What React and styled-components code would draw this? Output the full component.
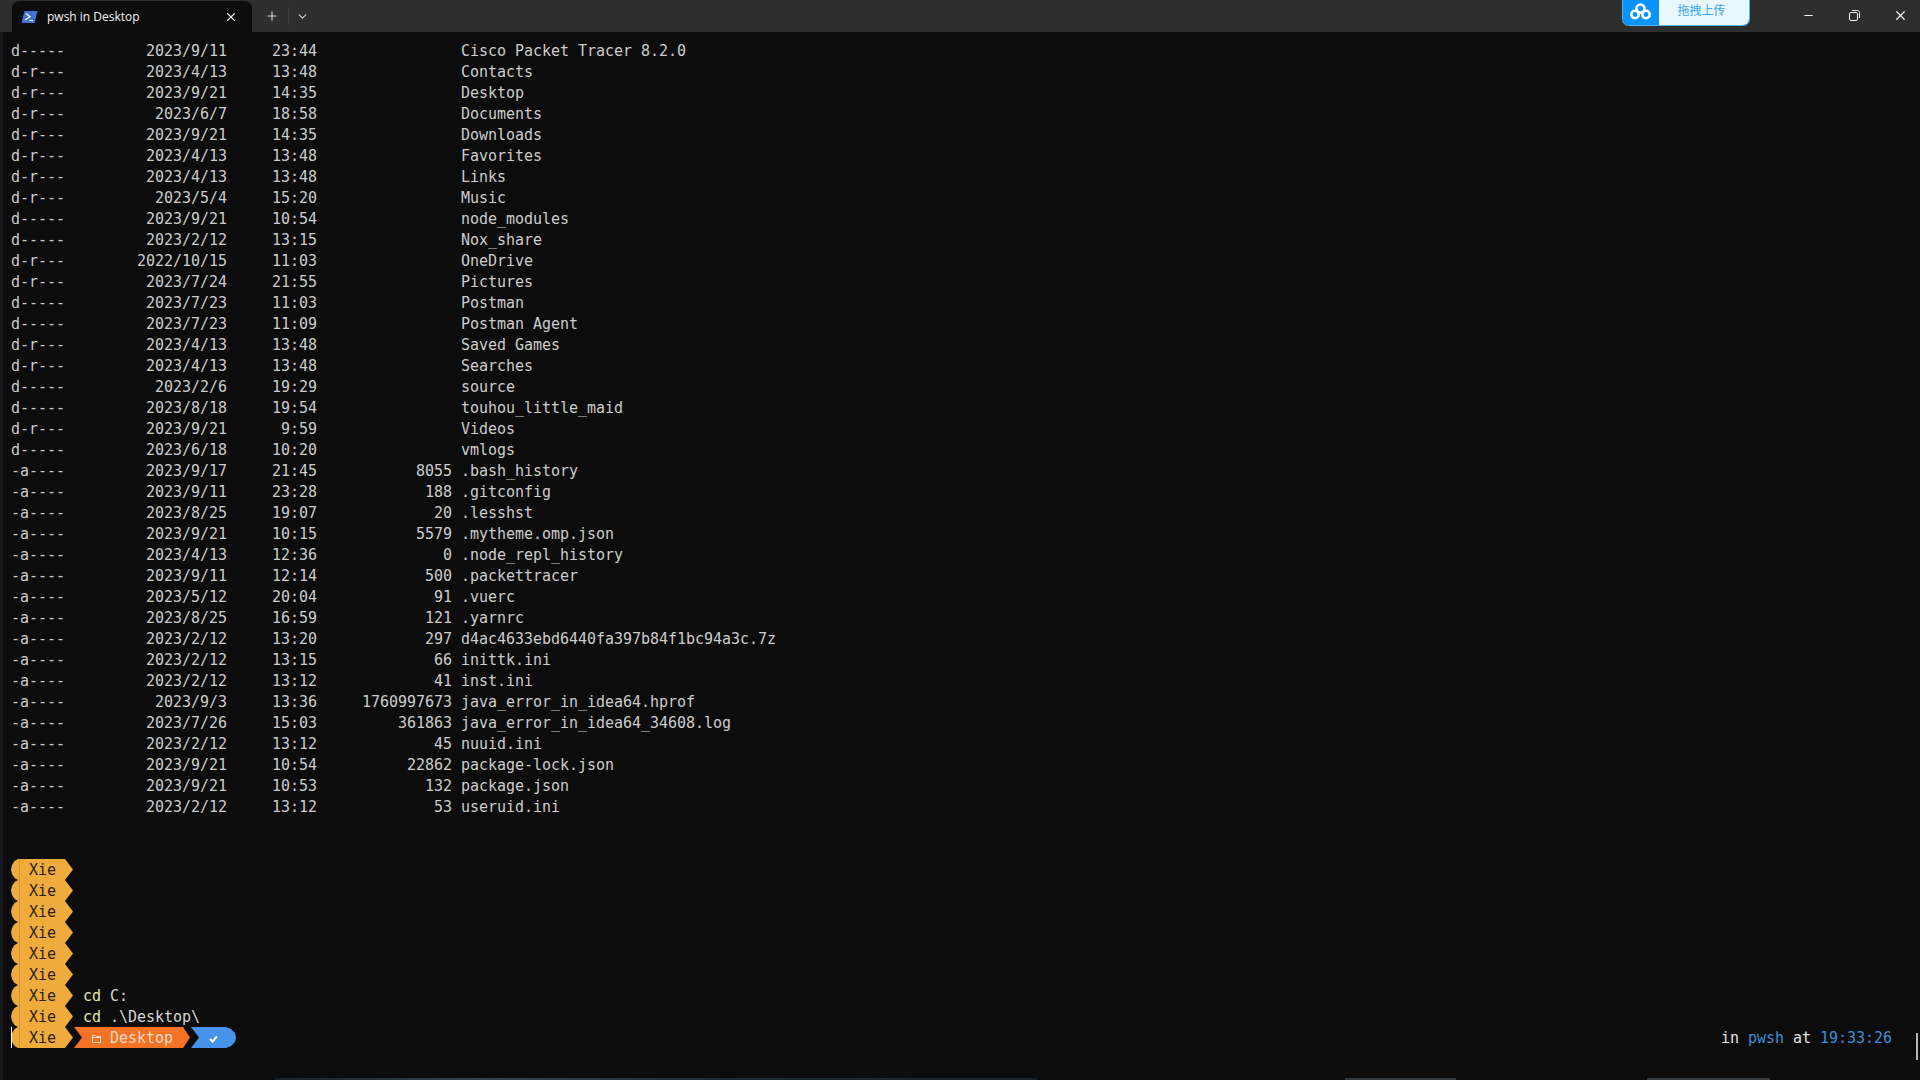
import React from "react";
import styled, { createGlobalStyle } from "styled-components";
import { Plus, ChevronDown, X, Minus } from "lucide-react";

const GlobalStyle = createGlobalStyle`
  html, body {
    margin: 0;
    height: 100%;
    background: #0c0c0c;
    overflow: hidden;
  }
`;

const mono = `"DejaVu Sans Mono", "Liberation Mono", monospace`;

const Window = styled.div`
  width: 1920px;
  height: 1080px;
  display: flex;
  flex-direction: column;
  background: #0c0c0c;
  overflow: hidden;
`;

const TitleBar = styled.div`
  height: 32px;
  flex: none;
  display: flex;
  align-items: flex-end;
  background: #2e2e2e;
  padding-left: 12px;
`;

const Tab = styled.div`
  width: 240px;
  height: 31px;
  display: flex;
  align-items: center;
  gap: 9px;
  padding: 0 14px 0 9px;
  box-sizing: border-box;
  background: #0c0c0c;
  border-radius: 7px 7px 0 0;
  color: #f4f4f4;
  font: 12px "Open Sans", "Liberation Sans", sans-serif;
`;

const TabTitle = styled.span`
  flex: 1;
`;

const TabTools = styled.div`
  display: flex;
  align-items: center;
  height: 32px;
  padding-left: 13px;
  gap: 9px;
  color: #d8d8d8;
`;

const ToolDivider = styled.div`
  width: 1px;
  height: 18px;
  margin-right: -2px;
  background: #3d3d3d;
`;

const Spacer = styled.div`
  flex: 1;
`;

const Upload = styled.div`
  align-self: flex-start;
  width: 128px;
  height: 26px;
  display: flex;
  box-sizing: border-box;
  border-radius: 0 0 7px 7px;
  border: 1px solid #4fb4f2;
  border-top: none;
  overflow: hidden;
  margin-right: 35px;
`;

const UploadLogo = styled.div`
  width: 36px;
  background: #0a94fb;
  display: flex;
  align-items: center;
  justify-content: center;
  padding: 0 2px 3px 0;
  box-sizing: border-box;
`;

const UploadLabel = styled.div`
  flex: 1;
  background: #e9f7ff;
  color: #3aa5ea;
  font: 12px "Noto Sans CJK SC", sans-serif;
  line-height: 19px;
  text-align: center;
  padding-right: 5px;
`;

const WinButtons = styled.div`
  align-self: stretch;
  display: flex;
  color: #f0f0f0;
  margin-right: -3px;
  padding-bottom: 2px;
`;

const WinButton = styled.div`
  width: 46px;
  display: flex;
  align-items: center;
  justify-content: center;
`;

const Terminal = styled.div`
  flex: 1;
  position: relative;
  padding: 9px 0 0 11px;
  border-left: 3px solid #17181a;
  box-sizing: border-box;
  color: #cccccc;
  font: 15px/21px ${mono};
  letter-spacing: -0.03px;
  white-space: pre;
`;

const Listing = styled.div`
  display: grid;
  grid-template-columns: 72px 144px 90px 135px 1fr;
  grid-auto-rows: 21px;
  margin-left: -3px;
`;

const Cell = styled.span`
  text-align: ${(p) => (p.$right ? "right" : "left")};
  padding-left: ${(p) => p.$pad || 0}px;
`;

const Blank = styled.div`
  height: 41px;
`;

const PromptRow = styled.div`
  height: 21px;
  display: flex;
  align-items: center;
  margin-left: -3px;
`;

const Pill = styled.div`
  height: 21px;
  display: flex;
  align-items: center;
  box-sizing: border-box;
  padding: 2px 0 0 ${(p) => p.$pl}px;
  color: ${(p) => p.$fg};
  background: ${(p) => p.$bg};
  clip-path: ${(p) => p.$clip};
  width: ${(p) => p.$w}px;
  margin-left: ${(p) => p.$ml || 0}px;
  flex: none;
`;

const XiePill = styled(Pill)`
  position: relative;

  &::before {
    content: "";
    position: absolute;
    left: 8px;
    top: 0;
    bottom: 0;
    width: 1px;
    background: #d0953a;
  }
`;

const Command = styled.span`
  color: #e6e6b0;
  margin-left: 10px;
  padding-top: 2px;
`;

const CommandArg = styled.span`
  color: #d6d6d6;
`;

const Dotted = styled.span`
  border-bottom: 1px dotted #f7d0b4;
  line-height: 19px;
`;

const RightPrompt = styled.div`
  position: absolute;
  right: 28px;
  bottom: 31px;
  height: 21px;
  color: #e4e4e4;
`;

const Blue = styled.span`
  color: #3f8cd4;
`;

const Caret = styled.div`
  position: absolute;
  left: ${(p) => p.$x}px;
  bottom: ${(p) => p.$b}px;
  width: ${(p) => p.$w}px;
  height: ${(p) => p.$h}px;
  background: ${(p) => p.$c};
`;

const BottomEdge = styled.div`
  position: absolute;
  left: 272px;
  right: 150px;
  bottom: 0;
  height: 2px;
  background: linear-gradient(
    90deg,
    #1a2126 0,
    #39424a 14%,
    #202a30 30%,
    #1a2126 51%,
    #0c0c0c 51%,
    #0c0c0c 71.6%,
    #30363a 71.6%,
    #30363a 79%,
    #0c0c0c 79%,
    #0c0c0c 91.8%,
    #343a3e 91.8%,
    #343a3e 100%
  );
`;

const FILES = [
  ["d-----", "2023/9/11", "23:44", "", "Cisco Packet Tracer 8.2.0"],
  ["d-r---", "2023/4/13", "13:48", "", "Contacts"],
  ["d-r---", "2023/9/21", "14:35", "", "Desktop"],
  ["d-r---", "2023/6/7", "18:58", "", "Documents"],
  ["d-r---", "2023/9/21", "14:35", "", "Downloads"],
  ["d-r---", "2023/4/13", "13:48", "", "Favorites"],
  ["d-r---", "2023/4/13", "13:48", "", "Links"],
  ["d-r---", "2023/5/4", "15:20", "", "Music"],
  ["d-----", "2023/9/21", "10:54", "", "node_modules"],
  ["d-----", "2023/2/12", "13:15", "", "Nox_share"],
  ["d-r---", "2022/10/15", "11:03", "", "OneDrive"],
  ["d-r---", "2023/7/24", "21:55", "", "Pictures"],
  ["d-----", "2023/7/23", "11:03", "", "Postman"],
  ["d-----", "2023/7/23", "11:09", "", "Postman Agent"],
  ["d-r---", "2023/4/13", "13:48", "", "Saved Games"],
  ["d-r---", "2023/4/13", "13:48", "", "Searches"],
  ["d-----", "2023/2/6", "19:29", "", "source"],
  ["d-----", "2023/8/18", "19:54", "", "touhou_little_maid"],
  ["d-r---", "2023/9/21", "9:59", "", "Videos"],
  ["d-----", "2023/6/18", "10:20", "", "vmlogs"],
  ["-a----", "2023/9/17", "21:45", "8055", ".bash_history"],
  ["-a----", "2023/9/11", "23:28", "188", ".gitconfig"],
  ["-a----", "2023/8/25", "19:07", "20", ".lesshst"],
  ["-a----", "2023/9/21", "10:15", "5579", ".mytheme.omp.json"],
  ["-a----", "2023/4/13", "12:36", "0", ".node_repl_history"],
  ["-a----", "2023/9/11", "12:14", "500", ".packettracer"],
  ["-a----", "2023/5/12", "20:04", "91", ".vuerc"],
  ["-a----", "2023/8/25", "16:59", "121", ".yarnrc"],
  ["-a----", "2023/2/12", "13:20", "297", "d4ac4633ebd6440fa397b84f1bc94a3c.7z"],
  ["-a----", "2023/2/12", "13:15", "66", "inittk.ini"],
  ["-a----", "2023/2/12", "13:12", "41", "inst.ini"],
  ["-a----", "2023/9/3", "13:36", "1760997673", "java_error_in_idea64.hprof"],
  ["-a----", "2023/7/26", "15:03", "361863", "java_error_in_idea64_34608.log"],
  ["-a----", "2023/2/12", "13:12", "45", "nuuid.ini"],
  ["-a----", "2023/9/21", "10:54", "22862", "package-lock.json"],
  ["-a----", "2023/9/21", "10:53", "132", "package.json"],
  ["-a----", "2023/2/12", "13:12", "53", "useruid.ini"],
];

// rounded lobe on the left, arrow on the right
const XIE_CLIP =
  "polygon(7px 0, 54px 0, 62px 10.5px, 54px 21px, 7px 21px, 3.5px 19px, 1px 15px, 0 10.5px, 1px 6px, 3.5px 2px)";

const XieSegment = () => (
  <XiePill $bg="#f0ab3d" $fg="#2b2010" $w={62} $pl={18} $clip={XIE_CLIP}>
    Xie
  </XiePill>
);

const PROMPTS = [null, null, null, null, null, null, "cd C:", "cd .\\Desktop\\"];

const PwshIcon = () => (
  <svg width="17" height="14" viewBox="0 0 17 14">
    <path d="M3.5 1H16.5L13.5 13H0.5Z" fill="#3f73d6" />
    <path d="M5 3.5L9 6.8L4 10" fill="none" stroke="#fff" strokeWidth="1.3" />
    <path d="M8.5 10.5H12" stroke="#fff" strokeWidth="1.2" />
  </svg>
);

const RestoreIcon = () => (
  <svg width="11" height="11" viewBox="0 0 11 11" fill="none" stroke="currentColor">
    <rect x="0.5" y="2.5" width="8" height="8" rx="1.5" />
    <path d="M3 0.5H8.5C9.6 0.5 10.5 1.4 10.5 2.5V8" />
  </svg>
);

const CloudLogo = () => (
  <svg width="21" height="17" viewBox="0 0 21 17" fill="none" stroke="#fff" strokeWidth="2.6">
    <circle cx="10.5" cy="5.5" r="4" />
    <circle cx="5" cy="11.5" r="3.7" />
    <circle cx="16" cy="11.5" r="3.7" />
  </svg>
);

const FolderIcon = () => (
  <svg width="9" height="9" viewBox="0 0 9 9" fill="none" stroke="#f7d8c0">
    <path d="M0.5 1.5H3.5L4.5 2.5H8.5V8.5H0.5Z" />
    <path d="M0.5 3.5H8.5" />
  </svg>
);

const App = () => (
  <Window>
    <GlobalStyle />
    <TitleBar>
      <Tab>
        <PwshIcon />
        <TabTitle>pwsh in Desktop</TabTitle>
        <X size={14} color="#e8e8e8" />
      </Tab>
      <TabTools>
        <Plus size={14} />
        <ToolDivider />
        <ChevronDown size={13} />
      </TabTools>
      <Spacer />
      <Upload>
        <UploadLogo>
          <CloudLogo />
        </UploadLogo>
        <UploadLabel>拖拽上传</UploadLabel>
      </Upload>
      <WinButtons>
        <WinButton>
          <Minus size={13} />
        </WinButton>
        <WinButton>
          <RestoreIcon />
        </WinButton>
        <WinButton>
          <X size={15} />
        </WinButton>
      </WinButtons>
    </TitleBar>
    <Terminal>
      <Listing>
        {FILES.map(([mode, date, time, size, name]) => (
          <React.Fragment key={name}>
            <Cell>{mode}</Cell>
            <Cell $right>{date}</Cell>
            <Cell $right>{time}</Cell>
            <Cell $right>{size}</Cell>
            <Cell $pad={9}>{name}</Cell>
          </React.Fragment>
        ))}
      </Listing>
      <Blank />
      {PROMPTS.map((cmd, i) => (
        <PromptRow key={i}>
          <XieSegment />
          {cmd && (
            <Command>
              {cmd.slice(0, 2)}
              <CommandArg>{cmd.slice(2)}</CommandArg>
            </Command>
          )}
        </PromptRow>
      ))}
      <PromptRow>
        <XieSegment />
        <Pill
          $bg="#f37326"
          $fg="#f8d9c2"
          $w={116}
          $ml={1}
          $pl={18}
          $clip="polygon(0 0, 109px 0, 116px 10.5px, 109px 21px, 0 21px, 8px 10.5px)"
        >
          <FolderIcon />
          &nbsp;
          <Dotted>Desktop</Dotted>
        </Pill>
        <Pill
          $bg="#4893ea"
          $fg="#fff"
          $w={45}
          $ml={1}
          $pl={18}
          $clip="polygon(0 0, 35px 0, 40px 2px, 44px 6px, 45px 10.5px, 44px 15px, 40px 19px, 35px 21px, 0 21px, 8px 10.5px)"
        >
          <svg width="9" height="8" viewBox="0 0 9 8">
            <path d="M1 4L3.5 6.5L8 1.5" fill="none" stroke="#fff" strokeWidth="2" />
          </svg>
        </Pill>
      </PromptRow>
      <Caret $x={8} $b={32} $w={1} $h={21} $c="#fff" />
      <RightPrompt>
        in <Blue>pwsh</Blue> at <Blue>19:33:26</Blue>
      </RightPrompt>
      <Caret $x={1913} $b={20} $w={2} $h={27} $c="#b5b5b5" />
      <BottomEdge />
    </Terminal>
  </Window>
);

export default App;
